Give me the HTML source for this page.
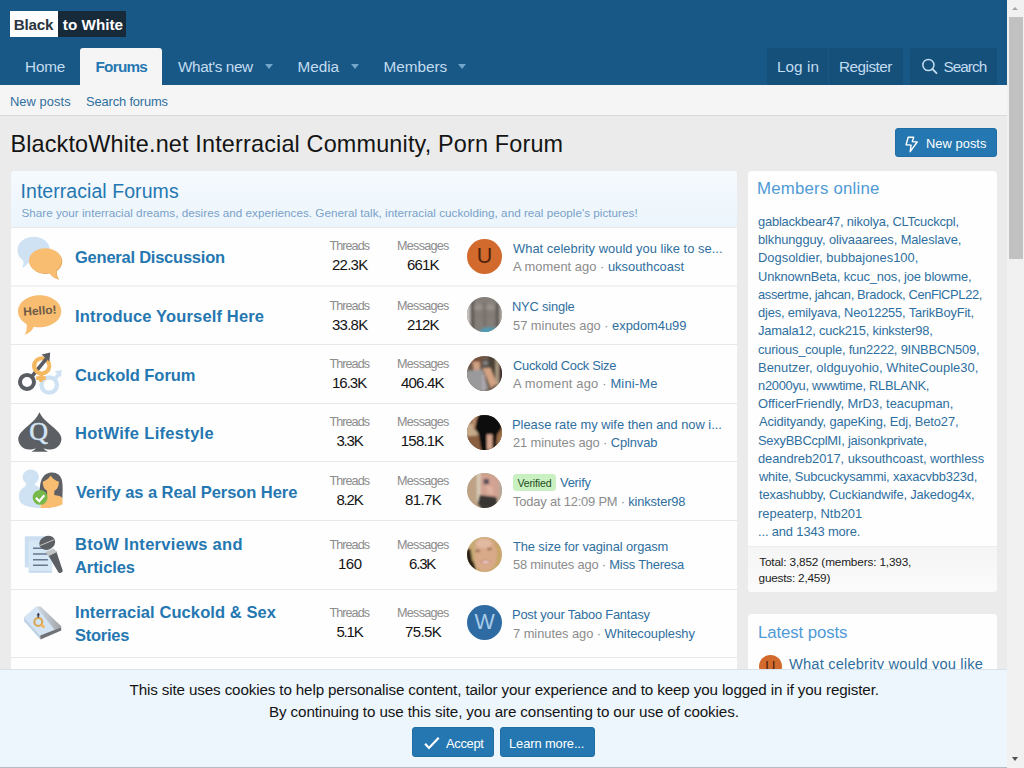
<!DOCTYPE html>
<html lang="en">
<head>
<meta charset="utf-8">
<title>BlacktoWhite.net Interracial Community, Porn Forum</title>
<style>
*{box-sizing:border-box;margin:0;padding:0}
html,body{width:1024px;height:768px;overflow:hidden}
body{position:relative;background:#ebebeb;font-family:"Liberation Sans",Arial,sans-serif;color:#141414;font-size:15px}
a{color:inherit;text-decoration:none}
h1,h2,h3{font-weight:normal;font-size:inherit}
.abs{position:absolute}
.tx{position:absolute;white-space:nowrap;line-height:1}
.tx a{color:#2f6f9f}
#header{position:absolute;left:0;top:0;width:1007px;height:84.5px;background:#185886}
#logo{position:absolute;left:10px;top:11px;width:116px;height:26px;background:#172a3a}
#logo .b{position:absolute;left:0;top:0;width:47.6px;height:26px;background:#fefefe}
#tabsel{position:absolute;left:80px;top:48px;width:82px;height:37px;background:#f5f5f5;border-radius:3px 3px 0 0}
.caret{position:absolute;top:64px;width:0;height:0;border-left:4.7px solid transparent;border-right:4.7px solid transparent;border-top:5.8px solid #74a5cb}
.hbtn{position:absolute;top:48px;height:36.5px;background:#15507b}
#subnav{position:absolute;left:0;top:84.5px;width:1007px;height:31px;background:#f5f5f5;border-bottom:1px solid #d9d9d9}
.btn{position:absolute;display:block;background:#2577b1;border-radius:3px;border:1px solid #216ea4}
#block{position:absolute;left:11px;top:170.5px;width:725.7px;height:540px;background:#fefefe;border-radius:4px;overflow:hidden}
#cat{position:absolute;left:0;top:0;width:100%;height:57px;background:linear-gradient(#f5fafe,#ecf5fc)}
.row{position:absolute;left:0;width:726px}
.sep{position:absolute;left:0;width:726px;height:1px;background:#e8e8e9}
.sep.h{height:2px;background:#f2f2f3}
.ic{position:absolute;left:6px;width:48px;height:46px}
.ic svg{position:absolute;left:0;top:0;overflow:visible}
.av{position:absolute;left:456px;width:35.2px;height:35.2px;border-radius:50%;overflow:hidden}
.av svg{display:block}
.tag{position:absolute;width:42.8px;height:16.6px;background:#c9f0c1;border-radius:3.5px}
.side{position:absolute;left:748px;width:248.6px;background:#fefefe;border-radius:4px;overflow:hidden}
#total{position:absolute;left:0;top:374.5px;width:100%;height:47px;background:linear-gradient(#f5f5f5,#fbfbfb);border-top:1px solid #ececec}
#cookie{position:absolute;left:0;top:669px;width:1007px;height:97.5px;background:#edf6fd;border-top:1px solid #d7e2ec;box-shadow:0 2px 0 #b7babe}
#sb{position:absolute;left:1007px;top:0;width:17px;height:768px;background:#f1f1f1}
#sb .th{position:absolute;left:2px;top:17px;width:13.5px;height:241.5px;background:#c1c1c1}
#sb .up{position:absolute;left:5px;top:7.3px;border-left:3.5px solid transparent;border-right:3.5px solid transparent;border-bottom:3.7px solid #a3a3a3}
#sb .dn{position:absolute;left:5.2px;top:757px;border-left:3.5px solid transparent;border-right:3.5px solid transparent;border-top:4px solid #505050}
</style>
</head>
<body>
<header id="header">
<a id="logo"><span class="b"></span><span class="tx " style="left:3.746px;top:6.008px;font-size:15.2px;color:#2a3540;font-weight:bold;letter-spacing:-0.186px;">Black</span><span class="tx " style="left:52.846px;top:6.008px;font-size:15.2px;color:#fff;font-weight:bold;letter-spacing:0.044px;">to White</span></a>
<nav>
<span class="tx " style="left:25px;top:59.002px;font-size:15.3px;color:#c3dcf0;letter-spacing:-0.167px;">Home</span>
<span id="tabsel"></span><span class="tx " style="left:95.5px;top:59.002px;font-size:15.3px;color:#2577b1;font-weight:bold;letter-spacing:-0.75px;">Forums</span>
<span class="tx " style="left:178px;top:59.002px;font-size:15.3px;color:#c3dcf0;letter-spacing:-0.389px;">What's new</span><i class="caret" style="left:264.5px"></i>
<span class="tx " style="left:297.4px;top:59.002px;font-size:15.3px;color:#c3dcf0;letter-spacing:0px;">Media</span><i class="caret" style="left:351px"></i>
<span class="tx " style="left:383.4px;top:59.002px;font-size:15.3px;color:#c3dcf0;letter-spacing:0px;">Members</span><i class="caret" style="left:458.3px"></i>
</nav>
<div class="hbtn" style="left:767px;width:61px;border-radius:3px 0 0 0"></div><div class="hbtn" style="left:829px;width:73.5px;border-radius:0 3px 0 0"></div><div class="hbtn" style="left:909.5px;width:87px;border-radius:3px 3px 0 0"></div>
<span class="tx " style="left:777px;top:59.002px;font-size:15.3px;color:#c3dcf0;letter-spacing:0.05px;">Log in</span><span class="tx " style="left:839px;top:59.002px;font-size:15.3px;color:#c3dcf0;letter-spacing:-0.5px;">Register</span><span class="tx " style="left:943.5px;top:59.002px;font-size:15.3px;color:#c3dcf0;letter-spacing:-0.95px;">Search</span><svg class="abs" style="left:920px;top:57px" width="18" height="18" viewBox="0 0 18 18"><circle cx="8.4" cy="8" r="5.55" fill="none" stroke="#c3dcf0" stroke-width="1.5"/><path d="M12.4 12 L16.5 16.2" stroke="#c3dcf0" stroke-width="1.8" stroke-linecap="round"/></svg>
</header>
<div id="subnav"><span class="tx " style="left:10px;top:11.502px;font-size:12.9px;color:#2f6f9f;letter-spacing:0.063px;">New posts</span><span class="tx " style="left:86px;top:11.502px;font-size:12.9px;color:#2f6f9f;letter-spacing:-0.146px;">Search forums</span></div>
<h1><span class="tx " style="left:10.4px;top:133.004px;font-size:23.4px;color:#141414;letter-spacing:0.173px;">BlacktoWhite.net Interracial Community, Porn Forum</span></h1>
<a class="btn" style="left:895px;top:128px;width:102px;height:29px"><svg class="abs" style="left:8.5px;top:6.5px" width="15" height="17" viewBox="0 0 15 17"><path d="M3.2 1.3 H8.7 L7.3 5.6 L12.2 6 L5.2 15.7 L6.1 9.1 L1.1 8.7 Z" fill="none" stroke="#fff" stroke-width="1.4" stroke-linejoin="round"/></svg><span class="tx " style="left:30px;top:9.002px;font-size:12.9px;color:#fff;letter-spacing:0.031px;">New posts</span></a>
<section id="block">
<div id="cat"><span class="tx " style="left:9.5px;top:11.509px;font-size:19.5px;color:#2577b1;letter-spacing:0.059px;">Interracial Forums</span><span class="tx " style="left:10.4px;top:36.502px;font-size:11.7px;color:#7aa1c8;letter-spacing:0.017px;">Share your interracial dreams, desires and experiences. General talk, interracial cuckolding, and real people's pictures!</span></div>
<div class="row" style="top:57.00px;height:58.50px">
<div class="ic" style="top:6.25px"><svg style="transform-origin:0 0;transform:translate(0.00px,0.00px) scale(1.000,1.000)" width="48" height="46" viewBox="0 0 48 46"><path d="M0.5 16.2 C0.5 8.6 7.6 2.85 16.65 2.85 C25.7 2.85 32.8 8.6 32.8 16.2 C32.8 23.8 25.7 29.8 16.65 29.8 C14.6 29.8 12.6 29.5 10.8 28.9 C9.6 31.2 7.6 32.9 4.9 33.8 C6.3 31.6 6.7 29.2 6.3 26.6 C2.7 24.2 0.5 20.4 0.5 16.2Z" fill="#cfe2f3"/><path d="M12 26.75 C12 19.8 19.2 14.25 28.25 14.25 C37.3 14.25 44.5 19.8 44.5 26.75 C44.5 30.6 42.4 34 39 36.3 C38.8 39.6 39.6 42.6 41.6 45 C37.4 44.4 34.2 42.2 32.4 38.9 C31.1 39.15 29.7 39.25 28.25 39.25 C19.2 39.25 12 33.7 12 26.75Z" fill="#dfa65e" transform="translate(.8 .7)"/><path d="M12 26.75 C12 19.8 19.2 14.25 28.25 14.25 C37.3 14.25 44.5 19.8 44.5 26.75 C44.5 30.6 42.4 34 39 36.3 C38.8 39.6 39.6 42.6 41.6 45 C37.4 44.4 34.2 42.2 32.4 38.9 C31.1 39.15 29.7 39.25 28.25 39.25 C19.2 39.25 12 33.7 12 26.75Z" fill="#f8bd70"/></svg></div><h3><span class="tx " style="left:64px;top:21.501px;font-size:16.5px;color:#2577b1;font-weight:bold;letter-spacing:-0.235px;">General Discussion</span></h3>
<span class="tx " style="left:318.4px;top:12.506px;font-size:12.6px;color:#8c8c8c;letter-spacing:-0.917px;">Threads</span><span class="tx " style="left:321px;top:29.506px;font-size:15px;color:#141414;letter-spacing:-0.75px;">22.3K</span><span class="tx " style="left:386px;top:12.506px;font-size:12.6px;color:#8c8c8c;letter-spacing:-0.714px;">Messages</span><span class="tx " style="left:396px;top:29.506px;font-size:15px;color:#141414;letter-spacing:-0.833px;">661K</span>
<div class="av" style="top:11.30px;background:#d2692d"><span class="tx " style="left:0px;top:-18.2px;font-size:21.5px;color:#4d230c;letter-spacing:0px;position:static;display:block;line-height:35.2px;text-align:center;">U</span></div><span class="tx " style="left:502px;top:15.502px;font-size:12.9px;color:#2f6f9f;letter-spacing:0.027px;">What celebrity would you like to se...</span><span class="tx " style="left:502px;top:33.502px;font-size:12.9px;color:#8c8c8c;letter-spacing:0.019px;">A moment ago · <a>uksouthcoast</a></span>
</div>
<div class="row" style="top:115.50px;height:58.50px">
<div class="ic" style="top:6.25px"><svg style="transform-origin:0 0;transform:translate(0.00px,0.00px) scale(1.000,1.000)" width="48" height="46" viewBox="0 0 48 46"><path d="M1 19.35 C1 10.5 10.6 3.35 22.6 3.35 C34.6 3.35 44.25 10.5 44.25 19.35 C44.25 28.2 34.6 35.35 22.6 35.35 C20.6 35.35 18.7 35.15 16.9 34.8 C15 38.8 12 41.6 7.6 42.8 C9.6 39.6 10.2 36 9.6 32.2 C4.4 29.3 1 24.6 1 19.35Z" fill="#f8bd70"/><text x="22.9" y="22.6" text-anchor="middle" font-family="Liberation Sans,Arial,sans-serif" font-weight="bold" font-size="11.8" fill="#6e5a48" transform="rotate(-4.3 22.9 19)" textLength="33.5" lengthAdjust="spacingAndGlyphs">Hello!</text></svg></div><h3><span class="tx " style="left:64px;top:22.002px;font-size:16.5px;color:#2577b1;font-weight:bold;letter-spacing:0.159px;">Introduce Yourself Here</span></h3>
<span class="tx " style="left:318.4px;top:14.006px;font-size:12.6px;color:#8c8c8c;letter-spacing:-0.917px;">Threads</span><span class="tx " style="left:321px;top:31.006px;font-size:15px;color:#141414;letter-spacing:-0.75px;">33.8K</span><span class="tx " style="left:386px;top:14.006px;font-size:12.6px;color:#8c8c8c;letter-spacing:-0.714px;">Messages</span><span class="tx " style="left:396px;top:31.006px;font-size:15px;color:#141414;letter-spacing:-0.833px;">212K</span>
<div class="av" style="top:11.30px"><svg width="35.2" height="35.2" viewBox="0 0 36 36"><defs><filter id="bl1" x="-20%" y="-20%" width="140%" height="140%"><feGaussianBlur stdDeviation="1.4"/></filter></defs><rect width="36" height="36" fill="#857e79"/><g filter="url(#bl1)"><rect x="-2" y="-2" width="5.5" height="40" fill="#cdc8c4"/><rect x="3.5" y="4" width="3.5" height="30" fill="#544f4b"/><rect x="29.5" y="6" width="4" height="26" fill="#5c5652"/><rect x="33.5" y="-2" width="5" height="40" fill="#b9b3ad"/><ellipse cx="11.5" cy="11" rx="4.5" ry="4" fill="#99928c"/><ellipse cx="24" cy="11" rx="4.5" ry="4" fill="#99928c"/><rect x="17.4" y="6" width="1.2" height="24" fill="#5f5954"/><path d="M8 14.5 H28 M9 20 H27" stroke="#79726d" stroke-width="1.2"/><ellipse cx="22.5" cy="35.5" rx="9.5" ry="4.2" fill="#4b9cb6"/></g></svg></div><span class="tx " style="left:501px;top:15.002px;font-size:12.9px;color:#2f6f9f;letter-spacing:-0.194px;">NYC single</span><span class="tx " style="left:502px;top:34.002px;font-size:12.9px;color:#8c8c8c;letter-spacing:-0.029px;">57 minutes ago · <a>expdom4u99</a></span>
</div>
<div class="row" style="top:174.00px;height:58.75px">
<div class="ic" style="top:6.38px"><svg style="transform-origin:0 0;transform:translate(0.00px,0.00px) scale(1.000,1.000)" width="48" height="46" viewBox="0 0 48 46"><g fill="none"><circle cx="32.2" cy="34" r="7.7" stroke="#cfe2f3" stroke-width="4.2"/><path d="M37.4 28.6 L41.6 23.4" stroke="#cfe2f3" stroke-width="3.6"/><path d="M37.6 20.3 L44.9 18.9 L43.9 26.2Z" fill="#cfe2f3"/><circle cx="10" cy="30.95" r="7" stroke="#595c61" stroke-width="4"/><circle cx="24.75" cy="14.9" r="7.6" stroke="#f4b860" stroke-width="4"/><path d="M14.8 25.6 L29.4 7.6" stroke="#595c61" stroke-width="3.7"/><path d="M24.6 3.4 L33.2 1.4 L32.4 10.4Z" fill="#595c61"/><path d="M22.15 22.04 A7.6 7.6 0 0 1 17.6 12.3" stroke="#f4b860" stroke-width="4"/><path d="M24.4 22.3 L24 31 M19.2 27.2 H28.8" stroke="#f4b860" stroke-width="3.8"/></g></svg></div><h3><span class="tx " style="left:64px;top:22.502px;font-size:16.5px;color:#2577b1;font-weight:bold;letter-spacing:-0.042px;">Cuckold Forum</span></h3>
<span class="tx " style="left:318.4px;top:13.506px;font-size:12.6px;color:#8c8c8c;letter-spacing:-0.917px;">Threads</span><span class="tx " style="left:321px;top:30.506px;font-size:15px;color:#141414;letter-spacing:-1px;">16.3K</span><span class="tx " style="left:386px;top:13.506px;font-size:12.6px;color:#8c8c8c;letter-spacing:-0.714px;">Messages</span><span class="tx " style="left:390px;top:30.506px;font-size:15px;color:#141414;letter-spacing:-0.8px;">406.4K</span>
<div class="av" style="top:11.42px"><svg width="35.2" height="35.2" viewBox="0 0 36 36"><defs><filter id="bl2" x="-20%" y="-20%" width="140%" height="140%"><feGaussianBlur stdDeviation="1"/></filter></defs><rect width="36" height="36" fill="#6e5a4c"/><g filter="url(#bl2)"><rect x="22" y="-2" width="8" height="24" fill="#4a4236"/><rect x="29" y="2" width="4" height="28" fill="#a89880"/><rect x="33" y="-2" width="5" height="40" fill="#3a2028"/><path d="M3 2 H16 L15 9 H5Z" fill="#7a5038"/><path d="M5.5 6 H13 L13.5 15 L7 16Z" fill="#d0a084"/><path d="M-2 15 L16 14 L22 34 L8 38 H-2Z" fill="#9a9a9c"/><rect x="15" y="4" width="7.5" height="9" fill="#57534f"/><rect x="16.5" y="5.5" width="4.5" height="3.5" fill="#8a8886"/><path d="M16 12.5 L24 12 L30.5 28 L24.5 33 L20 22Z" fill="#d2a282"/><rect x="15.8" y="19" width="2.4" height="18" fill="#b3abb2"/></g></svg></div><span class="tx " style="left:502px;top:15.502px;font-size:12.9px;color:#2f6f9f;letter-spacing:-0.297px;">Cuckold Cock Size</span><span class="tx " style="left:502px;top:33.502px;font-size:12.9px;color:#8c8c8c;letter-spacing:0.19px;">A moment ago · <a>Mini-Me</a></span>
</div>
<div class="row" style="top:232.75px;height:58.50px">
<div class="ic" style="top:6.25px"><svg style="transform-origin:0 0;transform:translate(0.00px,0.00px) scale(1.000,1.000)" width="48" height="46" viewBox="0 0 48 46"><path d="M22.4 2.2 C25.5 8.5 31 12.8 36.6 17.6 C42 22.3 45.2 26.2 44.3 30.6 C43.4 35.6 39 39.4 33.6 39.6 C31 39.7 28.6 39.2 26.6 38.2 C27.6 39.8 29 40.8 30.5 41.2 L30.5 41.7 H14.9 L14.9 41.2 C16.4 40.8 17.8 39.8 18.8 38.2 C16.8 39.2 14.4 39.7 11.8 39.6 C6.4 39.4 2.2 35.6 1.4 30.6 C0.6 26.2 3.6 22.3 9 17.6 C14.6 12.8 19.6 8.5 22.4 2.2Z" fill="#5c5f64"/><text x="21.6" y="29.8" text-anchor="middle" font-family="Liberation Serif,serif" font-size="26" fill="#d3e5f5" stroke="#d3e5f5" stroke-width=".5">Q</text></svg></div><h3><span class="tx " style="left:64px;top:21.752px;font-size:16.5px;color:#2577b1;font-weight:bold;letter-spacing:0.312px;">HotWife Lifestyle</span></h3>
<span class="tx " style="left:318.4px;top:12.756px;font-size:12.6px;color:#8c8c8c;letter-spacing:-0.917px;">Threads</span><span class="tx " style="left:325.4px;top:29.756px;font-size:15px;color:#141414;letter-spacing:-1.167px;">3.3K</span><span class="tx " style="left:386px;top:12.756px;font-size:12.6px;color:#8c8c8c;letter-spacing:-0.714px;">Messages</span><span class="tx " style="left:389.8px;top:29.756px;font-size:15px;color:#141414;letter-spacing:-0.8px;">158.1K</span>
<div class="av" style="top:11.30px"><svg width="35.2" height="35.2" viewBox="0 0 36 36"><defs><filter id="bl3" x="-20%" y="-20%" width="140%" height="140%"><feGaussianBlur stdDeviation="1"/></filter></defs><rect width="36" height="36" fill="#7a563c"/><g filter="url(#bl3)"><path d="M-2 9 L9 8 L12 21 L-2 22Z" fill="#c6aa8a"/><path d="M-2 22 L12 21 L15 38 H-2Z" fill="#8a5e40"/><path d="M4 1 L11 0 L11 16 L6.5 15Z" fill="#b98a6a"/><path d="M30 13 H38 V29 H29Z" fill="#9c7049"/><path d="M13 -2 L30 0 L36 13 L31 20 L29 35 L26 35 L26 20 L20 20 L20.5 38 L15 38 L12 20 L8 14 L10 4Z" fill="#0d0b0b"/><rect x="20.4" y="20" width="5.6" height="15" fill="#d6a68e"/></g></svg></div><span class="tx " style="left:501px;top:15.752px;font-size:12.9px;color:#2f6f9f;letter-spacing:-0.021px;">Please rate my wife then and now i...</span><span class="tx " style="left:502px;top:33.752px;font-size:12.9px;color:#8c8c8c;letter-spacing:-0.109px;">21 minutes ago · <a>Cplnvab</a></span>
</div>
<div class="row" style="top:291.25px;height:58.75px">
<div class="ic" style="top:6.38px"><svg style="transform-origin:0 0;transform:translate(0.00px,0.00px) scale(1.000,1.000)" width="48" height="46" viewBox="0 0 48 46"><ellipse cx="13.75" cy="8.9" rx="8.2" ry="7.4" fill="#cfe2f3"/><path d="M9.4 14.6 C9.6 17 8.6 18.2 6.6 19.4 C3 21.6 1.7 25.4 2.1 30 C2.5 34.6 5.4 36.6 9.6 38 C14 39.5 19 40 23.6 40 L23.6 20.4 C21.4 18.6 19 18 18 16.8 C17.6 16 17.6 15 18 14Z" fill="#cfe2f3"/><path d="M23.2 33 C22.4 25 22.5 17 24.4 12 C26.4 6.6 30.6 4.4 35 4.4 C40 4.4 44 7.2 45 12.6 C46 18 45.8 26 45 33Z" fill="#5e6064"/><path d="M33.6 7.4 C35.8 11 39.6 12.8 41.8 13.6 C42 19.2 39.4 23.6 33.8 23.8 C28.2 23.6 25.6 19.2 25.8 13.6 C27.8 12.8 31.4 11 33.6 7.4Z" fill="#f8bd70"/><path d="M23.6 40 L23.6 34 C24 30 27.4 28.2 30.2 27.2 L30 22 H37.4 L37.2 27 C41 27.6 44.8 28.2 45.4 30.6 L45.6 36.2 C39.6 39.6 31 40.2 23.6 40Z" fill="#f8bd70"/><circle cx="23.1" cy="29.4" r="7.45" fill="#76b849"/><path d="M18.9 29.9 L22.3 33.2 L27.3 27.2" fill="none" stroke="#fff" stroke-width="2.2"/></svg></div><h3><span class="tx " style="left:65px;top:22.252px;font-size:16.5px;color:#2577b1;font-weight:bold;letter-spacing:-0.056px;">Verify as a Real Person Here</span></h3>
<span class="tx " style="left:318.4px;top:13.256px;font-size:12.6px;color:#8c8c8c;letter-spacing:-0.917px;">Threads</span><span class="tx " style="left:325.4px;top:30.256px;font-size:15px;color:#141414;letter-spacing:-1.167px;">8.2K</span><span class="tx " style="left:386px;top:13.256px;font-size:12.6px;color:#8c8c8c;letter-spacing:-0.714px;">Messages</span><span class="tx " style="left:394px;top:30.256px;font-size:15px;color:#141414;letter-spacing:-0.625px;">81.7K</span>
<div class="av" style="top:11.42px"><svg width="35.2" height="35.2" viewBox="0 0 36 36"><defs><filter id="bl4" x="-20%" y="-20%" width="140%" height="140%"><feGaussianBlur stdDeviation="1.1"/></filter></defs><rect width="36" height="36" fill="#bda286"/><g filter="url(#bl4)"><rect x="10" y="-2" width="4" height="32" fill="#d8ccb8"/><path d="M14 1 L30 2 L35 14 L32 25 L14 23Z" fill="#d2a292"/><rect x="17" y="6" width="5.5" height="5.5" fill="#5a5058"/><path d="M20 12 L26 14 L27 22 L21 21Z" fill="#e0b4a0"/><path d="M13 22.5 L30 24.5 L31 34 L16 38 L11 31Z" fill="#383432"/><rect x="32.5" y="8" width="5" height="24" fill="#b8a898"/></g></svg></div><span class="tag" style="left:502px;top:12.65px"></span><span class="tx " style="left:506.4px;top:16.261px;font-size:10.6px;color:#1f4d1c;letter-spacing:-0.143px;">Verified</span><span class="tx " style="left:549px;top:15.252px;font-size:12.9px;color:#2f6f9f;letter-spacing:-0.25px;">Verify</span><span class="tx " style="left:502px;top:34.252px;font-size:12.9px;color:#8c8c8c;letter-spacing:-0.181px;">Today at 12:09 PM · <a>kinkster98</a></span>
</div>
<div class="row" style="top:350.00px;height:68.50px">
<div class="ic" style="top:11.25px"><svg style="transform-origin:0 0;transform:translate(0.00px,0.00px) scale(1.000,1.000)" width="48" height="46" viewBox="0 0 48 46"><rect x="7.8" y="4.35" width="21.7" height="31.2" rx="1.4" fill="#cbdff1"/><rect x="11.6" y="8.45" width="23.65" height="32.5" rx="1.6" fill="#d6e7f6"/><path d="M11.8 39.6 H35 " stroke="#c4d8ea" stroke-width="1.2"/><path d="M16 16.25 H30.9 M16 21.95 H30.9 M16 27.75 H30.9 M16 33.35 H30.9" stroke="#66788e" stroke-width="1.5"/><path d="M31.2 23.35 L39.3 19.25 L45.6 38.2 C45.9 39.2 45.5 39.9 44.7 40.3 L43.4 40.9 C42.5 41.3 41.6 41 41.2 40.1Z" fill="#5c5f64"/><path d="M28.5 19.95 L36.9 16.55 L39.6 20.2 L31.4 24.2Z" fill="#c3c4c6"/><ellipse cx="30.2" cy="10.85" rx="8.2" ry="6.8" fill="#5c5f64" transform="rotate(-24 30.2 10.85)"/><path d="M23 13.55 L37 7.75" stroke="#c3c4c6" stroke-width="1"/></svg></div><h3><span class="tx " style="left:64px;top:15.501px;font-size:16.5px;color:#2577b1;font-weight:bold;letter-spacing:0.292px;">BtoW Interviews and</span><span class="tx " style="left:64px;top:38.501px;font-size:16.5px;color:#2577b1;font-weight:bold;letter-spacing:-0.071px;">Articles</span></h3>
<span class="tx " style="left:318.4px;top:18.506px;font-size:12.6px;color:#8c8c8c;letter-spacing:-0.917px;">Threads</span><span class="tx " style="left:327px;top:35.506px;font-size:15px;color:#141414;letter-spacing:-0.5px;">160</span><span class="tx " style="left:386px;top:18.506px;font-size:12.6px;color:#8c8c8c;letter-spacing:-0.714px;">Messages</span><span class="tx " style="left:398px;top:35.506px;font-size:15px;color:#141414;letter-spacing:-1.167px;">6.3K</span>
<div class="av" style="top:16.30px"><svg width="35.2" height="35.2" viewBox="0 0 36 36"><defs><filter id="bl5" x="-20%" y="-20%" width="140%" height="140%"><feGaussianBlur stdDeviation="1"/></filter></defs><rect width="36" height="36" fill="#caa872"/><g filter="url(#bl5)"><path d="M-2 13 L4 12 L9 34 L-2 38Z" fill="#2a2018"/><ellipse cx="18.5" cy="18" rx="12" ry="17" fill="#d9aa8a"/><ellipse cx="17" cy="6.5" rx="8" ry="5" fill="#e2baa2"/><path d="M28.5 4 L33 8 L34 28 L29.5 30 L31 16Z" fill="#c8a468"/><path d="M3 8 L8 3 L8.5 16 L9 28 L5.5 24Z" fill="#c9aa74"/><ellipse cx="11" cy="14.2" rx="2.6" ry="1.1" fill="#86604a"/><ellipse cx="23" cy="12.4" rx="2.6" ry="1.1" fill="#86604a"/><ellipse cx="19" cy="25.4" rx="5.2" ry="2" fill="#c27c6c"/><ellipse cx="19.2" cy="25.6" rx="4" ry="1.1" fill="#f0dcd6"/></g></svg></div><span class="tx " style="left:502px;top:20.502px;font-size:12.9px;color:#2f6f9f;letter-spacing:-0.115px;">The size for vaginal orgasm</span><span class="tx " style="left:502px;top:38.502px;font-size:12.9px;color:#8c8c8c;letter-spacing:-0.196px;">58 minutes ago · <a>Miss Theresa</a></span>
</div>
<div class="row" style="top:418.50px;height:68.25px">
<div class="ic" style="top:11.12px"><svg style="transform-origin:0 0;transform:translate(0.00px,0.00px) scale(1.000,1.000)" width="48" height="46" viewBox="0 0 48 46"><defs><linearGradient id="bk" x1="0" y1="0" x2="1" y2="0"><stop offset="0" stop-color="#d2dbe4"/><stop offset="1" stop-color="#9fa3a8"/></linearGradient></defs><path d="M6.9 17.3 L19.1 6.6 L44.1 27.3 L23.2 35.4Z" fill="#d3e4f4"/><path d="M19.1 6.6 L23.6 6.6 L44.6 26.6 L44.1 27.3 L37.6 29.8Z" fill="url(#bk)"/><path d="M6.9 17.3 L23.2 35.4 L23.5 39.6 L7.2 21.2Z" fill="#bdd1e5"/><path d="M23.2 35.4 L44.1 27.3 L44.3 30.6 L23.5 39.6Z" fill="#6f7277"/><circle cx="21.3" cy="21.9" r="3.9" fill="none" stroke="#d9a95c" stroke-width="2.2"/><path d="M24.2 24.6 L27.4 27.4" stroke="#f5b562" stroke-width="2.6"/><path d="M21.3 17.6 L21.3 14.6" stroke="#3c3e52" stroke-width="1.6"/><path d="M19.6 15.2 L21.3 12.4 L23 15.2Z" fill="#3c3e52"/></svg></div><h3><span class="tx " style="left:64px;top:15.001px;font-size:16.5px;color:#2577b1;font-weight:bold;letter-spacing:0.083px;">Interracial Cuckold &amp; Sex</span><span class="tx " style="left:64px;top:38.001px;font-size:16.5px;color:#2577b1;font-weight:bold;letter-spacing:-0.25px;">Stories</span></h3>
<span class="tx " style="left:318.4px;top:18.006px;font-size:12.6px;color:#8c8c8c;letter-spacing:-0.917px;">Threads</span><span class="tx " style="left:325.4px;top:35.006px;font-size:15px;color:#141414;letter-spacing:-1.167px;">5.1K</span><span class="tx " style="left:386px;top:18.006px;font-size:12.6px;color:#8c8c8c;letter-spacing:-0.714px;">Messages</span><span class="tx " style="left:394px;top:35.006px;font-size:15px;color:#141414;letter-spacing:-0.625px;">75.5K</span>
<div class="av" style="top:16.17px;background:#2f6ba3"><span class="tx " style="left:0px;top:-18.2px;font-size:21.5px;color:#a9cbe8;letter-spacing:0px;position:static;display:block;line-height:35.2px;text-align:center;">W</span></div><span class="tx " style="left:501px;top:20.002px;font-size:12.9px;color:#2f6f9f;letter-spacing:-0.205px;">Post your Taboo Fantasy</span><span class="tx " style="left:502px;top:39.002px;font-size:12.9px;color:#8c8c8c;letter-spacing:-0.052px;">7 minutes ago · <a>Whitecoupleshy</a></span>
</div>
<i class="sep" style="top:56.50px"></i><i class="sep h" style="top:114.50px"></i><i class="sep" style="top:173.50px"></i><i class="sep" style="top:232.50px"></i><i class="sep" style="top:290.50px"></i><i class="sep" style="top:349.50px"></i><i class="sep" style="top:418.50px"></i><i class="sep" style="top:486.50px"></i>
</section>
<aside class="side" style="top:171px;height:421px">
<h3><span class="tx " style="left:9px;top:10.013px;font-size:16.8px;color:#4f9ad6;letter-spacing:0.231px;">Members online</span></h3>
<div id="members">
<span class="tx " style="left:10px;top:45.002px;font-size:12.9px;color:#2f6f9f;letter-spacing:-0.191px;">gablackbear47, nikolya, CLTcuckcpl,</span>
<span class="tx " style="left:10px;top:63.003px;font-size:12.9px;color:#2f6f9f;letter-spacing:-0.103px;">blkhungguy, olivaaarees, Maleslave,</span>
<span class="tx " style="left:10px;top:81.005px;font-size:12.9px;color:#2f6f9f;letter-spacing:0.02px;">Dogsoldier, bubbajones100,</span>
<span class="tx " style="left:10px;top:100.006px;font-size:12.9px;color:#2f6f9f;letter-spacing:-0.129px;">UnknownBeta, kcuc_nos, joe blowme,</span>
<span class="tx " style="left:10px;top:118.007px;font-size:12.9px;color:#2f6f9f;letter-spacing:-0.345px;">assertme, jahcan, Bradock, CenFlCPL22,</span>
<span class="tx " style="left:10px;top:136.008px;font-size:12.9px;color:#2f6f9f;letter-spacing:-0.176px;">djes, emilyava, Neo12255, TarikBoyFit,</span>
<span class="tx " style="left:10px;top:154.01px;font-size:12.9px;color:#2f6f9f;letter-spacing:-0.198px;">Jamala12, cuck215, kinkster98,</span>
<span class="tx " style="left:10px;top:173.011px;font-size:12.9px;color:#2f6f9f;letter-spacing:-0.2px;">curious_couple, fun2222, 9INBBCN509,</span>
<span class="tx " style="left:10px;top:191.012px;font-size:12.9px;color:#2f6f9f;letter-spacing:0.029px;">Benutzer, oldguyohio, WhiteCouple30,</span>
<span class="tx " style="left:10px;top:209.013px;font-size:12.9px;color:#2f6f9f;letter-spacing:-0.28px;">n2000yu, wwwtime, RLBLANK,</span>
<span class="tx " style="left:10px;top:227.015px;font-size:12.9px;color:#2f6f9f;letter-spacing:-0.016px;">OfficerFriendly, MrD3, teacupman,</span>
<span class="tx " style="left:11px;top:245px;font-size:12.9px;color:#2f6f9f;letter-spacing:-0.132px;">Acidityandy, gapeKing, Edj, Beto27,</span>
<span class="tx " style="left:10px;top:264.001px;font-size:12.9px;color:#2f6f9f;letter-spacing:-0.232px;">SexyBBCcplMI, jaisonkprivate,</span>
<span class="tx " style="left:10px;top:282.003px;font-size:12.9px;color:#2f6f9f;letter-spacing:-0.049px;">deandreb2017, uksouthcoast, worthless</span>
<span class="tx " style="left:11px;top:300.004px;font-size:12.9px;color:#2f6f9f;letter-spacing:-0.199px;">white, Subcuckysammi, xaxacvbb323d,</span>
<span class="tx " style="left:11px;top:318.005px;font-size:12.9px;color:#2f6f9f;letter-spacing:-0.179px;">texashubby, Cuckiandwife, Jakedog4x,</span>
<span class="tx " style="left:10px;top:337.006px;font-size:12.9px;color:#2f6f9f;letter-spacing:0.016px;">repeaterp, Ntb201</span>
<span class="tx " style="left:10px;top:355.008px;font-size:12.9px;color:#2f6f9f;letter-spacing:-0.132px;">... and 1343 more.</span>
</div>
<div id="total"><span class="tx " style="left:11.2px;top:10.511px;font-size:11.8px;color:#1c1c1c;letter-spacing:-0.161px;">Total: 3,852 (members: 1,393,</span><span class="tx " style="left:10.6px;top:26.511px;font-size:11.8px;color:#1c1c1c;letter-spacing:-0.231px;">guests: 2,459)</span></div>
</aside>
<aside class="side" style="top:614px;height:120px">
<h3><span class="tx " style="left:10px;top:11.013px;font-size:16.8px;color:#4f9ad6;letter-spacing:-0.091px;">Latest posts</span></h3>
<div class="av" style="left:10.5px;top:40.60000000000002px;width:23.5px;height:23.5px;background:#d2692d"><span class="tx " style="left:0px;top:-11.851px;font-size:14px;color:#4d230c;letter-spacing:0px;position:static;display:block;line-height:23.5px;text-align:center;">U</span></div><span class="tx " style="left:41px;top:43px;font-size:14.7px;color:#2f6f9f;letter-spacing:0.161px;">What celebrity would you like</span>
</aside>
<div id="cookie">
<span class="tx " style="left:129.6px;top:12.008px;font-size:15.2px;color:#141414;letter-spacing:-0.134px;">This site uses cookies to help personalise content, tailor your experience and to keep you logged in if you register.</span>
<span class="tx " style="left:269px;top:34.008px;font-size:15.2px;color:#141414;letter-spacing:-0.111px;">By continuing to use this site, you are consenting to our use of cookies.</span>
<a class="btn" style="left:412px;top:57px;width:82px;height:29.6px"><svg class="abs" style="left:10.5px;top:9px" width="17" height="13" viewBox="0 0 17 13"><path d="M1.1 6.8 L5 11 L14.7 .85" fill="none" stroke="#fff" stroke-width="2.2" stroke-linejoin="miter"/></svg><span class="tx " style="left:33px;top:10.002px;font-size:12.9px;color:#fff;letter-spacing:-0.3px;">Accept</span></a><a class="btn" style="left:499.5px;top:57px;width:95.5px;height:29.6px"><span class="tx " style="left:8.5px;top:10.002px;font-size:12.9px;color:#fff;letter-spacing:-0.104px;">Learn more...</span></a>
</div>
<div id="sb"><i class="up"></i><div class="th"></div><i class="dn"></i></div>
</body>
</html>
